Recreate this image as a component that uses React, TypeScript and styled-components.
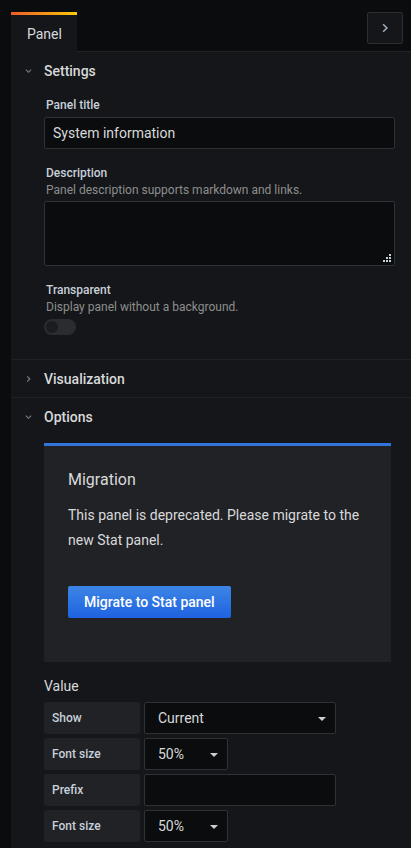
import React from 'react';
import styled, { createGlobalStyle } from 'styled-components';

const GlobalStyle = createGlobalStyle`
  html, body {
    margin: 0;
    padding: 0;
    background: #0b0c0e;
  }
  body {
    font-family: Roboto, 'Liberation Sans', sans-serif;
    color: #d8d9da;
  }
`;

const Page = styled.div`
  padding: 12px 0 0 11px;
  min-height: 848px;
  box-sizing: border-box;
`;

const TabBar = styled.div`
  display: flex;
  height: 40px;
`;

const Tab = styled.div`
  width: 66px;
  height: 40px;
  box-sizing: border-box;
  background: #141619;
  border-top: 3px solid transparent;
  border-image: linear-gradient(90deg, #f05a28, #fbca0a) 1;
  border-left: 0;
  border-right: 0;
  border-bottom: 0;
  border-image-slice: 1;
  border-image-width: 3px 0 0 0;
  padding: 0 0 0 16px;
  display: flex;
  align-items: center;
  font-size: 14px;
  color: #d8d9da;
  border-radius: 2px 2px 0 0;
`;

const TabRest = styled.div`
  flex: 1;
  border-bottom: 1px solid #202226;
  display: flex;
  justify-content: flex-end;
  align-items: flex-start;
  padding-right: 8px;
`;

const IconButton = styled.button`
  width: 36px;
  height: 32px;
  background: #141619;
  border: 1px solid #2c2e33;
  border-radius: 2px;
  color: #9fa7b3;
  display: flex;
  align-items: center;
  justify-content: center;
  padding: 0;
`;

const Content = styled.div`
  background: #141619;
  min-height: 796px;
`;

const Section = styled.div<{ $last?: boolean }>`
  border-bottom: ${(p) => (p.$last ? 'none' : '1px solid #202226')};
`;

const SectionHeader = styled.div`
  height: 37px;
  display: flex;
  align-items: center;
  padding-left: 14px;
  gap: 12px;
  font-size: 14px;
  font-weight: 500;
  color: #d8d9da;
`;

const Chevron = styled.span`
  width: 7px;
  display: flex;
  color: #7b8087;
`;

const SectionBody = styled.div`
  padding: 8px 16px 8px 33px;
`;

const Field = styled.div`
  margin-bottom: 16px;
`;

const Label = styled.div`
  font-size: 12px;
  font-weight: 500;
  line-height: 16px;
  color: #c7d0d9;
  padding-left: 2px;
`;

const Hint = styled.div`
  margin-top: 1px;
  font-size: 12px;
  line-height: 16px;
  color: #8e8e8e;
  padding-left: 2px;
`;

const TextInput = styled.div`
  margin-top: 4px;
  height: 32px;
  box-sizing: border-box;
  background: #0b0c0e;
  border: 1px solid #2c3235;
  border-radius: 2px;
  display: flex;
  align-items: center;
  padding: 0 8px;
  font-size: 14px;
  color: #d8d9da;
`;

const TextArea = styled.div`
  margin-top: 3px;
  height: 65px;
  box-sizing: border-box;
  background: #0b0c0e;
  border: 1px solid #2c3235;
  border-radius: 2px;
  display: flex;
  align-items: flex-end;
  justify-content: flex-end;
  padding: 0 3px 3px 0;
`;

const Toggle = styled.div`
  margin-top: 4px;
  width: 32px;
  height: 16px;
  border-radius: 8px;
  background: #2a2c31;
  display: flex;
  align-items: center;
  padding-left: 2px;
  box-sizing: border-box;
`;

const Knob = styled.div`
  width: 12px;
  height: 12px;
  border-radius: 50%;
  background: #1b1c20;
`;

const MigrationBox = styled.div`
  margin-right: 4px;
  background: #212226;
  border-top: 3px solid #3274d9;
  padding: 23px 24px 44px 24px;
  height: 219px;
  box-sizing: border-box;
`;

const MigrationTitle = styled.div`
  font-size: 16px;
  line-height: 22px;
  color: #d8d9da;
`;

const MigrationText = styled.p`
  margin: 12px 0 0 0;
  font-size: 14px;
  line-height: 25px;
  color: #d8d9da;
`;

const PrimaryButton = styled.button`
  margin-top: 33px;
  height: 32px;
  padding: 0 16px;
  border: 0;
  border-radius: 2px;
  background: linear-gradient(180deg, #3d85e6, #1f62e0);
  color: #fff;
  font-family: Roboto, 'Liberation Sans', sans-serif;
  font-size: 14px;
  font-weight: 500;
`;

const GroupTitle = styled.div`
  margin-top: 14px;
  font-size: 14px;
  line-height: 20px;
  color: #d8d9da;
`;

const FormRows = styled.div`
  margin-top: 6px;
  display: flex;
  flex-direction: column;
  gap: 4px;
`;

const FormRow = styled.div`
  display: flex;
  gap: 4px;
  height: 32px;
`;

const RowLabel = styled.div`
  width: 96px;
  background: #202226;
  border-radius: 2px;
  display: flex;
  align-items: center;
  padding-left: 8px;
  box-sizing: border-box;
  font-size: 12px;
  font-weight: 500;
  color: #c7d0d9;
`;

const Select = styled.div<{ $width: number }>`
  width: ${(p) => p.$width}px;
  box-sizing: border-box;
  background: #0b0c0e;
  border: 1px solid #2c3235;
  border-radius: 2px;
  display: flex;
  align-items: center;
  justify-content: space-between;
  padding: 0 9px 0 13px;
  font-size: 14px;
  color: #d8d9da;
`;

const Caret = styled.span`
  width: 0;
  height: 0;
  border-left: 4px solid transparent;
  border-right: 4px solid transparent;
  border-top: 4px solid #c7d0d9;
  margin-top: 2px;
`;

const ChevronDown = () => (
  <svg width="8" height="8" viewBox="0 0 8 8" fill="none">
    <path d="M1 2.5L4 5.5L7 2.5" stroke="currentColor" strokeWidth="1.2" />
  </svg>
);

const ChevronRight = ({ size = 8 }: { size?: number }) => (
  <svg width={size} height={size} viewBox="0 0 8 8" fill="none">
    <path d="M2.5 1L5.5 4L2.5 7" stroke="currentColor" strokeWidth="1.3" />
  </svg>
);

const ResizeGrip = () => (
  <svg width="8" height="8" viewBox="0 0 8 8">
    <rect x="6" y="0" width="2" height="2" fill="#c7d0d9" />
    <rect x="3" y="3" width="2" height="2" fill="#c7d0d9" />
    <rect x="6" y="3" width="2" height="2" fill="#c7d0d9" />
    <rect x="0" y="6" width="2" height="2" fill="#c7d0d9" />
    <rect x="3" y="6" width="2" height="2" fill="#c7d0d9" />
    <rect x="6" y="6" width="2" height="2" fill="#c7d0d9" />
  </svg>
);

const SelectBox = ({ value, width }: { value: string; width: number }) => (
  <Select $width={width}>
    <span>{value}</span>
    <Caret />
  </Select>
);

export default function App() {
  return (
    <Page>
      <GlobalStyle />
      <TabBar>
        <Tab>Panel</Tab>
        <TabRest>
          <IconButton>
            <ChevronRight size={10} />
          </IconButton>
        </TabRest>
      </TabBar>
      <Content>
        <Section>
          <SectionHeader>
            <Chevron>
              <ChevronDown />
            </Chevron>
            Settings
          </SectionHeader>
          <SectionBody>
            <Field>
              <Label>Panel title</Label>
              <TextInput>System information</TextInput>
            </Field>
            <Field>
              <Label>Description</Label>
              <Hint>Panel description supports markdown and links.</Hint>
              <TextArea>
                <ResizeGrip />
              </TextArea>
            </Field>
            <Field>
              <Label>Transparent</Label>
              <Hint>Display panel without a background.</Hint>
              <Toggle>
                <Knob />
              </Toggle>
            </Field>
          </SectionBody>
        </Section>
        <Section>
          <SectionHeader>
            <Chevron>
              <ChevronRight />
            </Chevron>
            Visualization
          </SectionHeader>
        </Section>
        <Section $last>
          <SectionHeader>
            <Chevron>
              <ChevronDown />
            </Chevron>
            Options
          </SectionHeader>
          <SectionBody>
            <MigrationBox>
              <MigrationTitle>Migration</MigrationTitle>
              <MigrationText>
                This panel is deprecated. Please migrate to the new Stat panel.
              </MigrationText>
              <PrimaryButton>Migrate to Stat panel</PrimaryButton>
            </MigrationBox>
            <GroupTitle>Value</GroupTitle>
            <FormRows>
              <FormRow>
                <RowLabel>Show</RowLabel>
                <SelectBox value="Current" width={192} />
              </FormRow>
              <FormRow>
                <RowLabel>Font size</RowLabel>
                <SelectBox value="50%" width={84} />
              </FormRow>
              <FormRow>
                <RowLabel>Prefix</RowLabel>
                <Select $width={192} />
              </FormRow>
              <FormRow>
                <RowLabel>Font size</RowLabel>
                <SelectBox value="50%" width={84} />
              </FormRow>
            </FormRows>
          </SectionBody>
        </Section>
      </Content>
    </Page>
  );
}
